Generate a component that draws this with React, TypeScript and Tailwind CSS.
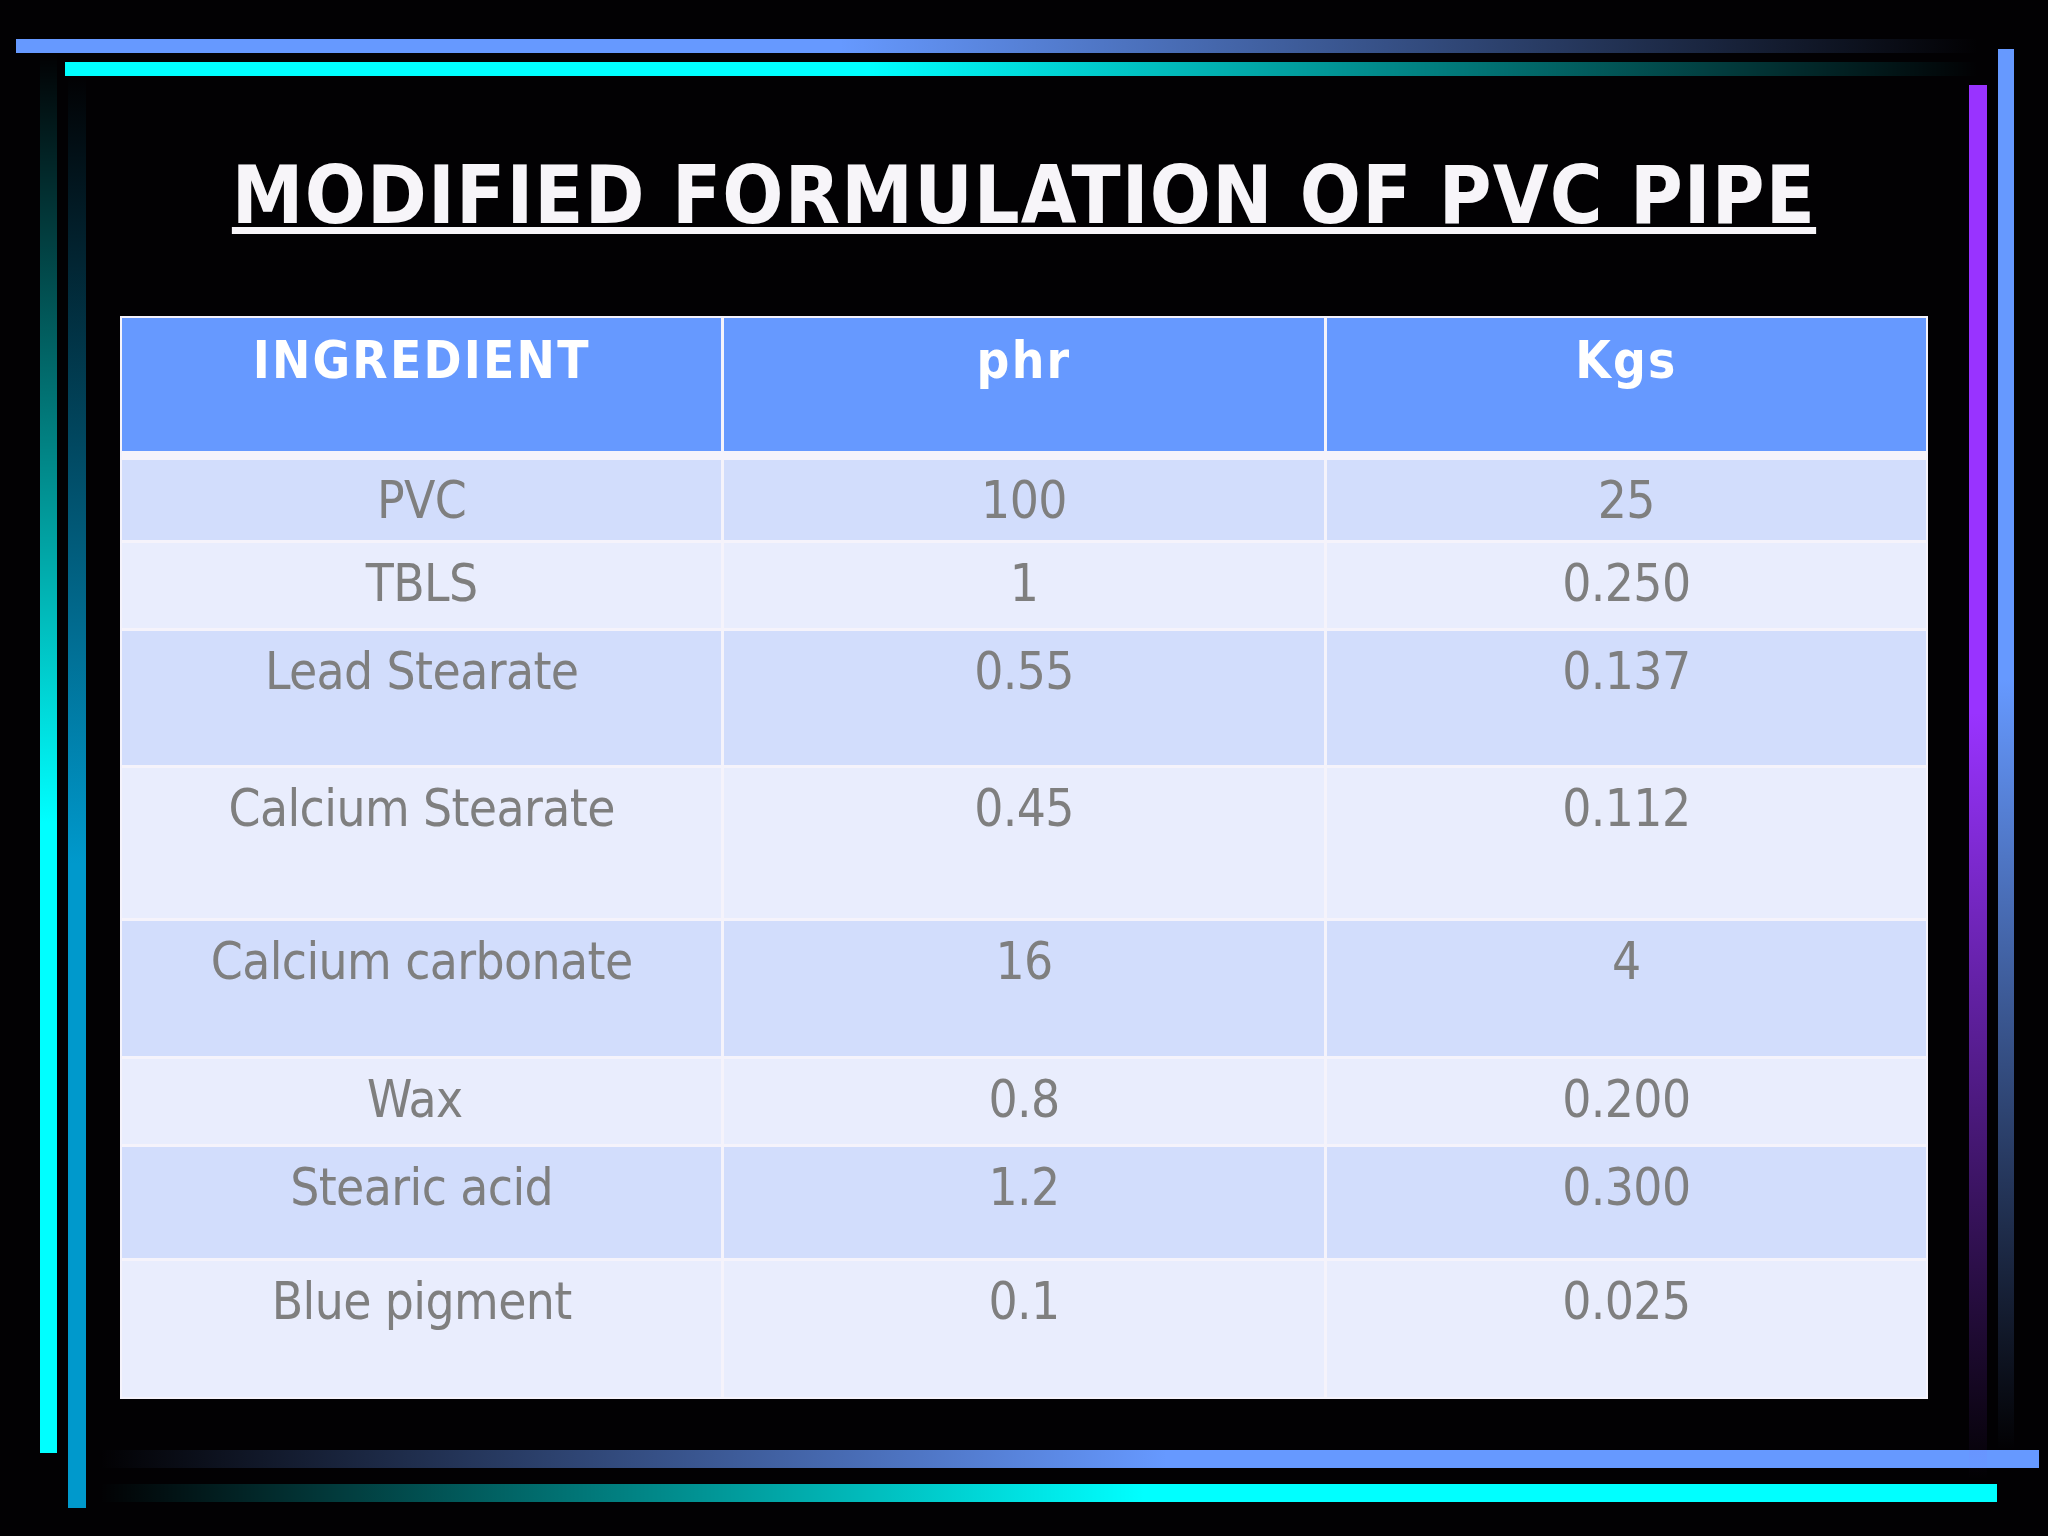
import React from "react";

const rows = [
    { name: "PVC", phr: "100", kgs: "25", h: "h-[80px]", tone: "bg-[#d2ddfc]" },
    { name: "TBLS", phr: "1", kgs: "0.250", h: "h-[85px]", tone: "bg-[#e9edfd]" },
    { name: "Lead Stearate", phr: "0.55", kgs: "0.137", h: "h-[134px]", tone: "bg-[#d2ddfc]" },
    { name: "Calcium Stearate", phr: "0.45", kgs: "0.112", h: "h-[150px]", tone: "bg-[#e9edfd]" },
    { name: "Calcium carbonate", phr: "16", kgs: "4", h: "h-[135px]", tone: "bg-[#d2ddfc]" },
    { name: "Wax\u00a0", phr: "0.8", kgs: "0.200", h: "h-[85px]", tone: "bg-[#e9edfd]" },
    { name: "Stearic acid", phr: "1.2", kgs: "0.300", h: "h-[111px]", tone: "bg-[#d2ddfc]" },
    { name: "Blue pigment", phr: "0.1", kgs: "0.025", h: "h-[136px]", tone: "bg-[#e9edfd]" },
];

function Frame() {
    return (
        <svg className="absolute inset-0 pointer-events-none" width="2048" height="1536">
            <defs>
                <linearGradient id="topBlue" x1="0" x2="1" y1="0" y2="0">
                    <stop offset="0" stopColor="#6699ff" />
                    <stop offset="0.42" stopColor="#6699ff" />
                    <stop offset="1" stopColor="#6699ff" stopOpacity="0" />
                </linearGradient>
                <linearGradient id="topCyan" x1="0" x2="1" y1="0" y2="0">
                    <stop offset="0" stopColor="#00ffff" />
                    <stop offset="0.42" stopColor="#00ffff" />
                    <stop offset="1" stopColor="#00ffff" stopOpacity="0" />
                </linearGradient>
                <linearGradient id="leftCyan" x1="0" x2="0" y1="0" y2="1">
                    <stop offset="0" stopColor="#00ffff" stopOpacity="0" />
                    <stop offset="0.55" stopColor="#00ffff" />
                    <stop offset="1" stopColor="#00ffff" />
                </linearGradient>
                <linearGradient id="leftTeal" x1="0" x2="0" y1="0" y2="1">
                    <stop offset="0" stopColor="#0099cc" stopOpacity="0" />
                    <stop offset="0.55" stopColor="#0099cc" />
                    <stop offset="1" stopColor="#0099cc" />
                </linearGradient>
                <linearGradient id="botBlue" x1="0" x2="1" y1="0" y2="0">
                    <stop offset="0" stopColor="#6699ff" stopOpacity="0" />
                    <stop offset="0.55" stopColor="#6699ff" />
                    <stop offset="1" stopColor="#6699ff" />
                </linearGradient>
                <linearGradient id="botCyan" x1="0" x2="1" y1="0" y2="0">
                    <stop offset="0" stopColor="#00ffff" stopOpacity="0" />
                    <stop offset="0.55" stopColor="#00ffff" />
                    <stop offset="1" stopColor="#00ffff" />
                </linearGradient>
                <linearGradient id="rightPurple" x1="0" x2="0" y1="0" y2="1">
                    <stop offset="0" stopColor="#9933ff" />
                    <stop offset="0.45" stopColor="#9933ff" />
                    <stop offset="1" stopColor="#9933ff" stopOpacity="0" />
                </linearGradient>
                <linearGradient id="rightBlue" x1="0" x2="0" y1="0" y2="1">
                    <stop offset="0" stopColor="#6699ff" />
                    <stop offset="0.45" stopColor="#6699ff" />
                    <stop offset="1" stopColor="#6699ff" stopOpacity="0" />
                </linearGradient>
            </defs>
            <rect x="16" y="39" width="1962" height="14" fill="url(#topBlue)" />
            <rect x="65" y="62" width="1913" height="14" fill="url(#topCyan)" />
            <rect x="40" y="53" width="17" height="1400" fill="url(#leftCyan)" />
            <rect x="68" y="76" width="18" height="1432" fill="url(#leftTeal)" />
            <rect x="100" y="1450" width="1939" height="18" fill="url(#botBlue)" />
            <rect x="100" y="1484" width="1897" height="18" fill="url(#botCyan)" />
            <rect x="1969" y="85" width="18" height="1395" fill="url(#rightPurple)" />
            <rect x="1998" y="49" width="16" height="1401" fill="url(#rightBlue)" />
        </svg>
    );
}

export default function App() {
    return (
        <div
            className="relative w-[2048px] h-[1536px] bg-[#020103] overflow-hidden"
            style={{ fontFamily: '"DejaVu Sans Condensed", "DejaVu Sans", sans-serif' }}
        >
            <Frame />

            <div className="relative flex flex-col items-center pt-[156px]">
                {/* Title */}
                <h1 className="text-[80px] leading-[1] font-bold font-stretch-condensed tracking-[1.2px] text-[#f7f5f9] underline decoration-[7px] underline-offset-[4px]">
                    MODIFIED FORMULATION OF PVC PIPE
                </h1>

                {/* Table */}
                <div className="mt-[80px] w-[1808px] border-2 border-[#f5f3fb] bg-[#f5f3fb] flex flex-col">
                    <div className="grid grid-cols-3 gap-[3px] h-[133px] mb-[9px]">
                        {["INGREDIENT", "phr", "Kgs"].map((h) => (
                            <div
                                key={h}
                                className="bg-[#6699ff] text-white font-bold font-stretch-condensed tracking-[2.2px] text-[51px] leading-[1] text-center pt-[17px]"
                            >
                                {h}
                            </div>
                        ))}
                    </div>
                    <div className="flex flex-col gap-[3px]">
                        {rows.map((r) => (
                            <div key={r.name} className={`grid grid-cols-3 gap-[3px] ${r.h}`}>
                                {[r.name, r.phr, r.kgs].map((v, i) => (
                                    <div
                                        key={i}
                                        className={`${r.tone} text-[#7f7f7f] font-stretch-condensed tracking-[-0.6px] text-[51px] leading-[1] text-center pt-[15px]`}
                                    >
                                        {v}
                                    </div>
                                ))}
                            </div>
                        ))}
                    </div>
                </div>
            </div>
        </div>
    );
}
